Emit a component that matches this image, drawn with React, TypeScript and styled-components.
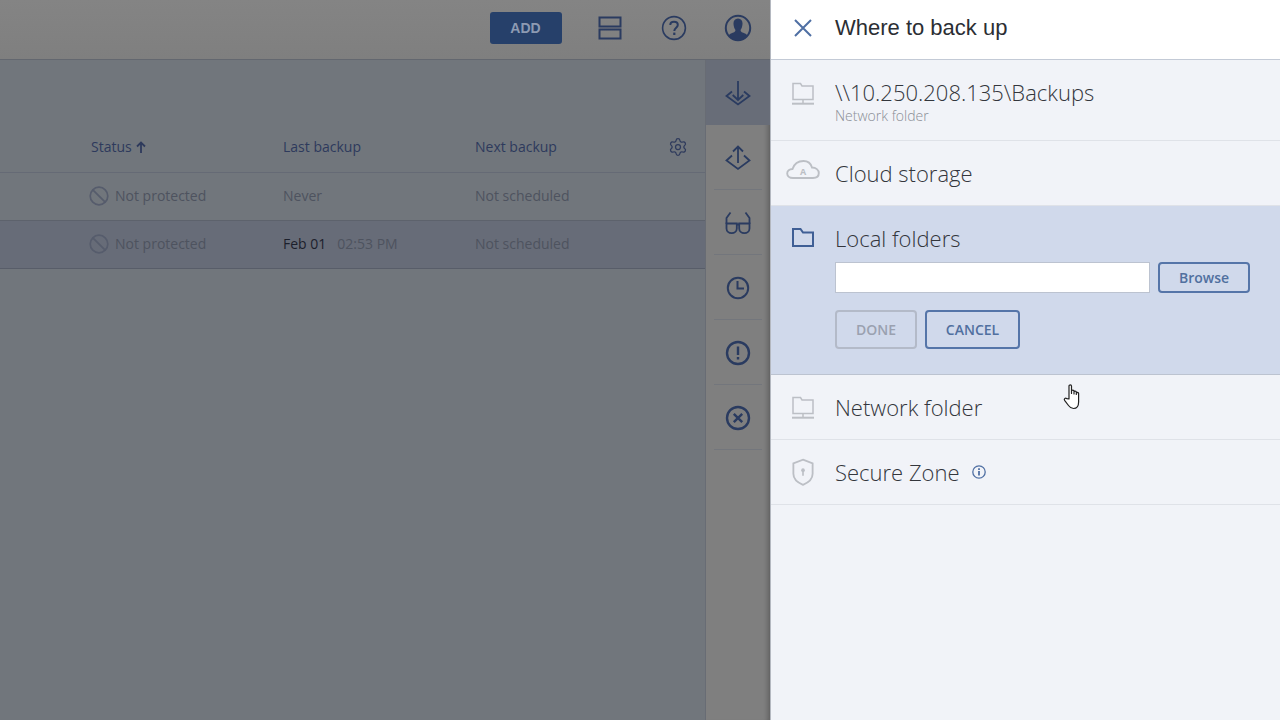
import React from "react";
import styled, { createGlobalStyle } from "styled-components";
import { Settings } from "lucide-react";

const Global = createGlobalStyle`
  html, body { margin: 0; padding: 0; height: 100%; overflow: hidden; }
  #root { height: 100%; }
  * { box-sizing: border-box; }
`;

const Page = styled.div`
  position: relative;
  width: 1280px;
  height: 720px;
  display: flex;
  font-family: "Open Sans", "Liberation Sans", sans-serif;
`;

const Dimmed = styled.div`
  width: 770px;
  height: 720px;
  display: flex;
  flex-direction: column;
  background: #7f7f7f;
`;

const TopBar = styled.div`
  height: 60px;
  flex: none;
  display: flex;
  align-items: center;
  justify-content: flex-end;
  padding-bottom: 4px;
  background: linear-gradient(#848484, #7f7f7f);
  border-bottom: 1px solid #63676f;
`;

const AddButton = styled.div`
  width: 72px;
  height: 32px;
  margin-right: 16px;
  padding-right: 1px;
  border-radius: 3px;
  background: #26406a;
  color: #8d9ab2;
  display: flex;
  align-items: center;
  justify-content: center;
  font: bold 14px "Liberation Sans", sans-serif;
`;

const TopIcon = styled.div`
  width: 64px;
  height: 56px;
  display: flex;
  align-items: center;
  justify-content: center;
`;

const Lower = styled.div`
  flex: 1;
  display: flex;
`;

const Main = styled.div`
  width: 705px;
  background: #71767c;
  padding-top: 65px;
`;

const HeaderRow = styled.div`
  height: 48px;
  padding-bottom: 4px;
  display: grid;
  grid-template-columns: 91px 192px 192px 193px 20px 1fr;
  align-items: center;
  border-bottom: 1px solid #656a75;
  color: #2e3a5c;
  font-size: 14px;
`;

const HeaderSpacer = styled.span``;

const SortLabel = styled.span`
  display: flex;
  align-items: center;
  gap: 4px;
`;

const GearCell = styled.span`
  display: flex;
  color: #2e3a5c;
`;

const Row = styled.div<{ $selected?: boolean }>`
  height: 48px;
  padding-bottom: 2px;
  display: grid;
  grid-template-columns: 89px 194px 192px 1fr;
  align-items: center;
  border-bottom: 1px solid ${(p) => (p.$selected ? "#585d69" : "#5d626c")};
  background: ${(p) => (p.$selected ? "#676c78" : "transparent")};
  color: #4e535f;
  font-size: 14px;
`;

const StatusCell = styled.span`
  display: flex;
  align-items: center;
  gap: 6px;
`;

const DateText = styled.span`
  color: #1c202c;
  margin-right: 11px;
`;

const Side = styled.div`
  width: 65px;
  border-left: 1px solid #686c74;
  display: flex;
  flex-direction: column;
  box-shadow: inset -6px 0 5px -4px #5e5e5e;
`;

const SideItem = styled.div<{ $active?: boolean; $line?: boolean }>`
  height: 65px;
  display: flex;
  align-items: center;
  justify-content: center;
  position: relative;
  background: ${(p) => (p.$active ? "#686d78" : "transparent")};
  &::after {
    content: "";
    display: ${(p) => (p.$line ? "block" : "none")};
    position: absolute;
    left: 8px;
    right: 8px;
    bottom: 0;
    height: 1px;
    background: #73767c;
  }
`;

const Panel = styled.div`
  width: 510px;
  height: 720px;
  background: #f1f3f8;
  display: flex;
  flex-direction: column;
  border-left: 1px solid #b4b8c0;
`;

const PanelHeader = styled.div`
  height: 60px;
  flex: none;
  background: #fff;
  border-bottom: 1px solid #c3cad6;
  display: flex;
  align-items: center;
  padding-bottom: 4px;
`;

const CloseCell = styled.div`
  width: 64px;
  display: flex;
  justify-content: center;
`;

const Title = styled.div`
  font: 22px "Liberation Sans", sans-serif;
  color: #2b2e33;
`;

const Item = styled.div<{ $h: number; $active?: boolean }>`
  height: ${(p) => p.$h}px;
  flex: none;
  display: flex;
  background: ${(p) => (p.$active ? "#d0d9eb" : "transparent")};
  border-bottom: 1px solid ${(p) => (p.$active ? "#bcc3d0" : "#dfe2e8")};
`;

const ItemIcon = styled.div<{ $top: number }>`
  width: 64px;
  flex: none;
  padding-top: ${(p) => p.$top}px;
  height: 64px;
  display: flex;
  justify-content: center;
`;

const ItemBody = styled.div`
  flex: 1;
  padding-top: 17px;
`;

const Label = styled.div`
  font-size: 22px;
  font-weight: 300;
  line-height: 30px;
  color: #33363c;
  display: flex;
  align-items: center;
  gap: 12px;
`;

const Sub = styled.div`
  font-size: 14px;
  font-weight: 300;
  line-height: 16px;
  color: #8a8e96;
  margin-top: 1px;
`;

const BrowseRow = styled.div`
  display: flex;
  gap: 8px;
  margin-top: 9px;
`;

const PathInput = styled.div`
  width: 315px;
  height: 31px;
  background: #fff;
  border: 1px solid #bcc3d0;
`;

const OutlineButton = styled.div<{ $w: number; $h: number; $disabled?: boolean }>`
  width: ${(p) => p.$w}px;
  height: ${(p) => p.$h}px;
  border: 2px solid ${(p) => (p.$disabled ? "#b3bac8" : "#5575a8")};
  border-radius: 4px;
  color: ${(p) => (p.$disabled ? "#9aa1b0" : "#50709f")};
  display: flex;
  align-items: center;
  justify-content: center;
  font-size: 14px;
  font-weight: 600;
`;

const ActionRow = styled.div`
  display: flex;
  gap: 8px;
  margin-top: 17px;
`;

const Cursor = styled.div`
  position: absolute;
  left: 1063px;
  top: 383px;
`;

const c = "#2a3b60";

const ArrowIn = () => (
  <svg width="26" height="26" viewBox="0 0 26 26" fill="none" stroke={c} strokeWidth="1.8">
    <path d="M13 1V20M7.7 15L13 20L18.3 15" />
    <path d="M7 11.5L1.5 16L13 24.5L24.5 16L19 11.5" />
  </svg>
);
const ArrowOut = () => (
  <svg width="26" height="26" viewBox="0 0 26 26" fill="none" stroke={c} strokeWidth="1.8">
    <path d="M13 18V1.5M8 6.5L13 1.5L18 6.5" />
    <path d="M7 10.5L1.5 15.5L13 24L24.5 15.5L19 10.5" />
  </svg>
);
const Glasses = () => (
  <svg width="26" height="24" viewBox="0 0 26 24" fill="none" stroke={c} strokeWidth="1.8">
    <path d="M1.5 13V7L5.5 1.5M24.5 13V7L20.5 1.5" />
    <path d="M1.5 12.5H11.8V17.5A5.1 4.6 0 0 1 1.5 17.5ZM14.2 12.5H24.5V17.5A5.1 4.6 0 0 1 14.2 17.5ZM11.8 13.5H14.2" />
  </svg>
);
const Clock = () => (
  <svg width="24" height="24" viewBox="0 0 24 24" fill="none" stroke={c} strokeWidth="2">
    <circle cx="12" cy="12" r="10.2" />
    <path d="M11.5 5V12.5H18" />
  </svg>
);
const Alert = () => (
  <svg width="26" height="26" viewBox="0 0 26 26" fill="none" stroke={c} strokeWidth="2.4">
    <circle cx="13" cy="13" r="11" />
    <path d="M13 6.5V15M13 17V19.5" />
  </svg>
);
const CrossCircle = () => (
  <svg width="26" height="26" viewBox="0 0 26 26" fill="none" stroke={c} strokeWidth="2.4">
    <circle cx="13" cy="13" r="11" />
    <path d="M8.8 8.8L17.2 17.2M17.2 8.8L8.8 17.2" />
  </svg>
);
const Layout = () => (
  <svg width="24" height="24" viewBox="0 0 24 24" fill="none" stroke={c} strokeWidth="2">
    <rect x="1.5" y="1.5" width="21" height="9" />
    <rect x="1.5" y="13.5" width="21" height="9" />
  </svg>
);
const Help = () => (
  <svg width="26" height="26" viewBox="0 0 26 26" fill="none" stroke={c} strokeWidth="1.6">
    <circle cx="13" cy="13" r="11.4" />
    <path d="M9.3 10C9.3 7.8 11 6.8 13 6.8C15.3 6.8 16.8 8.2 16.8 10C16.8 12.5 13.3 13 13.3 16" strokeWidth="2" />
    <path d="M13.3 17.6V20" strokeWidth="2.2" />
  </svg>
);
const User = () => (
  <svg width="28" height="28" viewBox="0 0 28 28">
    <circle cx="14" cy="14" r="12.2" fill="#7f7f7f" stroke={c} strokeWidth="2" />
    <path
      d="M14 4.5C10.8 4.5 9.3 7 9.5 10C9.7 13 10.6 15 11.5 16C11.5 18 9.5 18.5 7 19.5C5.5 20.2 4.7 21 4.4 22A12.4 12.4 0 0 0 23.6 22C23.3 21 22.5 20.2 21 19.5C18.5 18.5 16.5 18 16.5 16C17.4 15 18.3 13 18.5 10C18.7 7 17.2 4.5 14 4.5Z"
      fill={c}
    />
  </svg>
);
const NoEntry = () => (
  <svg width="20" height="20" viewBox="0 0 20 20" fill="none" stroke="#565c6c" strokeWidth="1.7">
    <circle cx="10" cy="10" r="8.8" />
    <path d="M3.8 3.8L16.2 16.2" />
  </svg>
);
const SortUp = () => (
  <svg width="10" height="12" viewBox="0 0 10 12" fill="none" stroke="#2e3a5c" strokeWidth="1.8">
    <path d="M5 12V1.5M1 5.5L5 1.5L9 5.5" />
  </svg>
);
const CloseX = () => (
  <svg width="18" height="18" viewBox="0 0 18 18" fill="none" stroke="#4f6fa3" strokeWidth="2">
    <path d="M1 1L17 17M17 1L1 17" />
  </svg>
);
const NetFolder = () => (
  <svg width="22" height="24" viewBox="0 0 22 24" fill="none" stroke="#bcbfc5" strokeWidth="1.5">
    <path d="M1 17.5V1.5H8.5L10 4H21V17.5Z" />
    <path d="M11 17.5V21" />
    <path d="M0 21.7H22" strokeWidth="2" />
  </svg>
);
const Cloud = () => (
  <svg width="34" height="24" viewBox="0 0 34 24" fill="none" stroke="#bcbfc5" strokeWidth="1.9">
    <path d="M7 20C3.5 20 1.2 18 1.2 15.5C1.2 13 3.5 11 6.5 11C8 6.5 12 3 17.5 3C22 3 25 6 26 9.5C30 9.5 32.8 12 32.8 15C32.8 18 30.5 20 27 20Z" />
    <text x="17" y="16.5" textAnchor="middle" fontFamily="Open Sans" fontWeight="700" fontSize="9" fill="#bcbfc5" stroke="none">A</text>
  </svg>
);
const LocalFolder = () => (
  <svg width="22" height="22" viewBox="0 0 22 22" fill="none" stroke="#3f5f95" strokeWidth="2">
    <path d="M1 20V3H8.5L11 6.5H21V20Z" />
  </svg>
);
const Shield = () => (
  <svg width="22" height="28" viewBox="0 0 24 30" fill="none" stroke="#bcbfc5" strokeWidth="2">
    <path d="M12 1.5L22.5 5.5V17C22.5 23 17 27 12 29C7 27 1.5 23 1.5 17V5.5Z" />
    <circle cx="12" cy="13" r="2" fill="#bcbfc5" stroke="none" />
    <path d="M12 13V19" strokeWidth="1.8" />
  </svg>
);
const Info = () => (
  <svg width="14" height="14" viewBox="0 0 14 14" fill="none" stroke="#4f6fa3" strokeWidth="1.3">
    <circle cx="7" cy="7" r="6.2" />
    <path d="M7 6V10.5M7 3.2V5" strokeWidth="1.8" />
  </svg>
);
const Hand = () => (
  <svg width="20" height="28" viewBox="0 0 20 28" fill="#fff" stroke="#222" strokeWidth="1.2" strokeLinejoin="round">
    <path d="M6 16V3C6 1.5 8.5 1.5 8.5 3V10.5V8C8.5 6.8 11 6.8 11 8V11V9C11 7.8 13.3 7.8 13.3 9V11.5V10C13.3 9 15.6 9 15.6 10.3V19C15.6 23 14 25.5 10.5 25.5C8 25.5 6.8 24.3 5.5 22.5L1.6 17.3C0.6 15.8 2.5 14.5 3.7 15.6Z" />
  </svg>
);

const rows = [
  { date: null },
  { date: "Feb 01", selected: true },
];

export default function App() {
  return (
    <Page>
      <Global />
      <Dimmed>
        <TopBar>
          <AddButton>ADD</AddButton>
          <TopIcon><Layout /></TopIcon>
          <TopIcon><Help /></TopIcon>
          <TopIcon><User /></TopIcon>
        </TopBar>
        <Lower>
          <Main>
            <HeaderRow>
              <HeaderSpacer />
              <SortLabel>Status <SortUp /></SortLabel>
              <span>Last backup</span>
              <span>Next backup</span>
              <GearCell><Settings size={20} strokeWidth={1.5} /></GearCell>
              <HeaderSpacer />
            </HeaderRow>
            {rows.map((r, i) => (
              <Row key={i} $selected={r.selected}>
                <span />
                <StatusCell><NoEntry />Not protected</StatusCell>
                {r.date ? (
                  <span><DateText>{r.date}</DateText>02:53 PM</span>
                ) : (
                  <span>Never</span>
                )}
                <span>Not scheduled</span>
              </Row>
            ))}
          </Main>
          <Side>
            <SideItem $active><ArrowIn /></SideItem>
            <SideItem $line><ArrowOut /></SideItem>
            <SideItem $line><Glasses /></SideItem>
            <SideItem $line><Clock /></SideItem>
            <SideItem $line><Alert /></SideItem>
            <SideItem $line><CrossCircle /></SideItem>
          </Side>
        </Lower>
      </Dimmed>
      <Panel>
        <PanelHeader>
          <CloseCell><CloseX /></CloseCell>
          <Title>Where to back up</Title>
        </PanelHeader>
        <Item $h={81}>
          <ItemIcon $top={22}><NetFolder /></ItemIcon>
          <ItemBody>
            <Label>\\10.250.208.135\Backups</Label>
            <Sub>Network folder</Sub>
          </ItemBody>
        </Item>
        <Item $h={65}>
          <ItemIcon $top={17}><Cloud /></ItemIcon>
          <ItemBody><Label>Cloud storage</Label></ItemBody>
        </Item>
        <Item $h={169} $active>
          <ItemIcon $top={20}><LocalFolder /></ItemIcon>
          <ItemBody>
            <Label>Local folders</Label>
            <BrowseRow>
              <PathInput />
              <OutlineButton $w={92} $h={31}>Browse</OutlineButton>
            </BrowseRow>
            <ActionRow>
              <OutlineButton $w={82} $h={39} $disabled>DONE</OutlineButton>
              <OutlineButton $w={95} $h={39}>CANCEL</OutlineButton>
            </ActionRow>
          </ItemBody>
        </Item>
        <Item $h={65}>
          <ItemIcon $top={21}><NetFolder /></ItemIcon>
          <ItemBody><Label>Network folder</Label></ItemBody>
        </Item>
        <Item $h={65}>
          <ItemIcon $top={18}><Shield /></ItemIcon>
          <ItemBody><Label>Secure Zone <Info /></Label></ItemBody>
        </Item>
      </Panel>
      <Cursor><Hand /></Cursor>
    </Page>
  );
}
